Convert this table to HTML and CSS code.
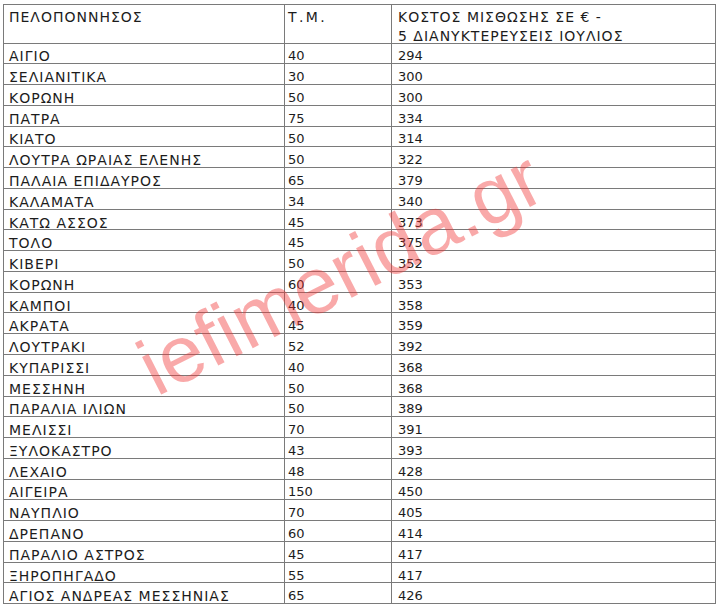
FILE: index.html
```html
<!DOCTYPE html>
<html lang="el">
<head>
<meta charset="utf-8">
<title>Πελοπόννησος – κόστος μίσθωσης</title>
<link rel="stylesheet" href="styles.css">
</head>
<body>
<div class="page">
  <div class="sheet" role="table">
    <div class="cell head name" role="columnheader">ΠΕΛΟΠΟΝΝΗΣΟΣ</div>
    <div class="cell head sqm" role="columnheader">Τ.Μ.</div>
    <div class="cell head cost" role="columnheader">ΚΟΣΤΟΣ ΜΙΣΘΩΣΗΣ ΣΕ € -<br>5 ΔΙΑΝΥΚΤΕΡΕΥΣΕΙΣ ΙΟΥΛΙΟΣ</div>

    <div class="cell name">ΑΙΓΙΟ</div><div class="cell num sqm">40</div><div class="cell num cost">294</div>
    <div class="cell name">ΣΕΛΙΑΝΙΤΙΚΑ</div><div class="cell num sqm">30</div><div class="cell num cost">300</div>
    <div class="cell name">ΚΟΡΩΝΗ</div><div class="cell num sqm">50</div><div class="cell num cost">300</div>
    <div class="cell name">ΠΑΤΡΑ</div><div class="cell num sqm">75</div><div class="cell num cost">334</div>
    <div class="cell name">ΚΙΑΤΟ</div><div class="cell num sqm">50</div><div class="cell num cost">314</div>
    <div class="cell name">ΛΟΥΤΡΑ ΩΡΑΙΑΣ ΕΛΕΝΗΣ</div><div class="cell num sqm">50</div><div class="cell num cost">322</div>
    <div class="cell name">ΠΑΛΑΙΑ ΕΠΙΔΑΥΡΟΣ</div><div class="cell num sqm">65</div><div class="cell num cost">379</div>
    <div class="cell name">ΚΑΛΑΜΑΤΑ</div><div class="cell num sqm">34</div><div class="cell num cost">340</div>
    <div class="cell name">ΚΑΤΩ ΑΣΣΟΣ</div><div class="cell num sqm">45</div><div class="cell num cost">373</div>
    <div class="cell name">ΤΟΛΟ</div><div class="cell num sqm">45</div><div class="cell num cost">375</div>
    <div class="cell name">ΚΙΒΕΡΙ</div><div class="cell num sqm">50</div><div class="cell num cost">352</div>
    <div class="cell name">ΚΟΡΩΝΗ</div><div class="cell num sqm">60</div><div class="cell num cost">353</div>
    <div class="cell name">ΚΑΜΠΟΙ</div><div class="cell num sqm">40</div><div class="cell num cost">358</div>
    <div class="cell name">ΑΚΡΑΤΑ</div><div class="cell num sqm">45</div><div class="cell num cost">359</div>
    <div class="cell name">ΛΟΥΤΡΑΚΙ</div><div class="cell num sqm">52</div><div class="cell num cost">392</div>
    <div class="cell name">ΚΥΠΑΡΙΣΣΙ</div><div class="cell num sqm">40</div><div class="cell num cost">368</div>
    <div class="cell name">ΜΕΣΣΗΝΗ</div><div class="cell num sqm">50</div><div class="cell num cost">368</div>
    <div class="cell name">ΠΑΡΑΛΙΑ ΙΛΙΩΝ</div><div class="cell num sqm">50</div><div class="cell num cost">389</div>
    <div class="cell name">ΜΕΛΙΣΣΙ</div><div class="cell num sqm">70</div><div class="cell num cost">391</div>
    <div class="cell name">ΞΥΛΟΚΑΣΤΡΟ</div><div class="cell num sqm">43</div><div class="cell num cost">393</div>
    <div class="cell name">ΛΕΧΑΙΟ</div><div class="cell num sqm">48</div><div class="cell num cost">428</div>
    <div class="cell name">ΑΙΓΕΙΡΑ</div><div class="cell num sqm">150</div><div class="cell num cost">450</div>
    <div class="cell name">ΝΑΥΠΛΙΟ</div><div class="cell num sqm">70</div><div class="cell num cost">405</div>
    <div class="cell name">ΔΡΕΠΑΝΟ</div><div class="cell num sqm">60</div><div class="cell num cost">414</div>
    <div class="cell name">ΠΑΡΑΛΙΟ ΑΣΤΡΟΣ</div><div class="cell num sqm">45</div><div class="cell num cost">417</div>
    <div class="cell name">ΞΗΡΟΠΗΓΑΔΟ</div><div class="cell num sqm">55</div><div class="cell num cost">417</div>
    <div class="cell name">ΑΓΙΟΣ ΑΝΔΡΕΑΣ ΜΕΣΣΗΝΙΑΣ</div><div class="cell num sqm">65</div><div class="cell num cost">426</div>
  </div>
  <span class="watermark">iefimerida.gr</span>
</div>
</body>
</html>
```

FILE: styles.css
```css
html, body {
  margin: 0;
  padding: 0;
  background: #ffffff;
}

.page {
  position: relative;
  width: 720px;
  height: 609px;
  overflow: hidden;
  padding: 4px 0 0 3px;
  box-sizing: border-box;
}

.sheet {
  display: grid;
  grid-template-columns: 281px 107px 324px;
  grid-template-rows: 38.5px repeat(27, 20.77px);
  width: 713px;
  box-sizing: border-box;
  border-top: 1px solid #7a7a7a;
  border-right: 1px solid #7a7a7a;
  font-family: "DejaVu Sans", "Liberation Sans", sans-serif;
  font-size: 14px;
  color: #1c1c1c;
}

.cell {
  box-sizing: border-box;
  border-left: 1px solid #7a7a7a;
  border-bottom: 1px solid #7a7a7a;
  display: flex;
  align-items: center;
  padding-top: 6px;
  white-space: nowrap;
  letter-spacing: 1px;
  line-height: 14px;
}

.cell.num {
  font-size: 13px;
  letter-spacing: 0;
}

.cell.name {
  padding-left: 5px;
}

.cell.sqm {
  padding-left: 3px;
}

.cell.cost {
  padding-left: 6px;
}

.cell.head {
  display: block;
  padding-top: 3px;
  line-height: 19px;
}

.cell.head.sqm {
  letter-spacing: 2.4px;
}

.watermark {
  position: absolute;
  left: 157px;
  top: 330px;
  font-family: "Liberation Sans", Arial, sans-serif;
  font-size: 80px;
  line-height: 80px;
  white-space: nowrap;
  color: rgba(240, 50, 50, 0.42);
  transform-origin: 0 68px;
  transform: rotate(-27deg);
  pointer-events: none;
}
```
